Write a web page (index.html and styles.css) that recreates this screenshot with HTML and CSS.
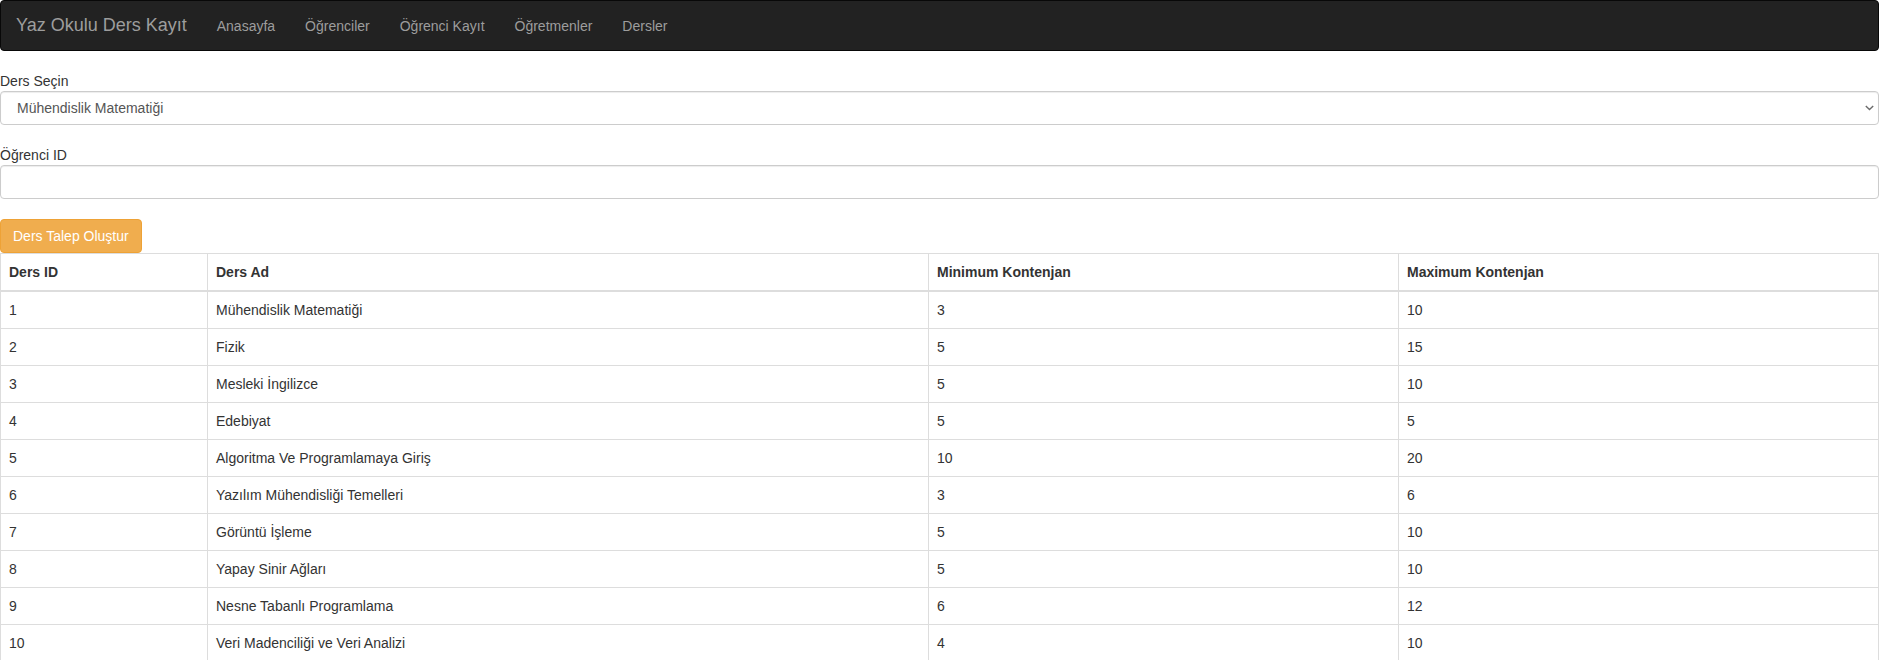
FILE: index.html
```html
<!DOCTYPE html>
<html lang="tr">
<head>
<meta charset="utf-8">
<title>Yaz Okulu Ders Kayıt</title>
<link rel="stylesheet" href="styles.css">
</head>
<body>
<nav class="navbar">
  <a class="brand" href="#">Yaz Okulu Ders Kayıt</a>
  <ul class="nav">
    <li><a href="#">Anasayfa</a></li>
    <li><a href="#">Öğrenciler</a></li>
    <li><a href="#">Öğrenci Kayıt</a></li>
    <li><a href="#">Öğretmenler</a></li>
    <li><a href="#">Dersler</a></li>
  </ul>
</nav>

<div class="form-group">
  <label class="label" for="ders">Ders Seçin</label>
  <div class="select-wrap">
    <select id="ders" class="form-control select">
      <option>Mühendislik Matematiği</option>
      <option>Fizik</option>
    </select>
    <svg class="chevron" width="9" height="6" viewBox="0 0 9 6" aria-hidden="true"><polyline points="0.8,1 4.5,4.6 8.2,1" fill="none" stroke="#6b6b6b" stroke-width="1.4"/></svg>
  </div>
</div>

<div class="form-group">
  <label class="label" for="ogr">Öğrenci ID</label>
  <input id="ogr" class="form-control" type="text">
</div>

<button class="btn-warning" type="button">Ders Talep Oluştur</button>

<table class="table">
  <thead>
    <tr>
      <th class="c1">Ders ID</th>
      <th class="c2">Ders Ad</th>
      <th class="c3">Minimum Kontenjan</th>
      <th class="c4">Maximum Kontenjan</th>
    </tr>
  </thead>
  <tbody>
    <tr><td>1</td><td>Mühendislik Matematiği</td><td>3</td><td>10</td></tr>
    <tr><td>2</td><td>Fizik</td><td>5</td><td>15</td></tr>
    <tr><td>3</td><td>Mesleki İngilizce</td><td>5</td><td>10</td></tr>
    <tr><td>4</td><td>Edebiyat</td><td>5</td><td>5</td></tr>
    <tr><td>5</td><td>Algoritma Ve Programlamaya Giriş</td><td>10</td><td>20</td></tr>
    <tr><td>6</td><td>Yazılım Mühendisliği Temelleri</td><td>3</td><td>6</td></tr>
    <tr><td>7</td><td>Görüntü İşleme</td><td>5</td><td>10</td></tr>
    <tr><td>8</td><td>Yapay Sinir Ağları</td><td>5</td><td>10</td></tr>
    <tr><td>9</td><td>Nesne Tabanlı Programlama</td><td>6</td><td>12</td></tr>
    <tr><td>10</td><td>Veri Madenciliği ve Veri Analizi</td><td>4</td><td>10</td></tr>
  </tbody>
</table>
</body>
</html>
```

FILE: styles.css
```css
* { box-sizing: border-box; }
html, body { margin: 0; padding: 0; }
body {
  font-family: "Liberation Sans", Arial, Helvetica, sans-serif;
  font-size: 14px;
  line-height: 20px;
  color: #333;
  background: #fff;
}
.navbar {
  display: flex;
  align-items: center;
  height: 51px;
  background: #222;
  border: 1px solid #080808;
  border-radius: 4px;
  margin-bottom: 20px;
}
.brand {
  font-size: 18px;
  line-height: 20px;
  padding: 14px 15px 15px;
  color: #9d9d9d;
  text-decoration: none;
}
.nav {
  display: flex;
  list-style: none;
  margin: 0;
  padding: 0;
}
.nav a {
  display: block;
  padding: 15px;
  color: #9d9d9d;
  text-decoration: none;
  line-height: 20px;
}
.form-group { margin-bottom: 20px; }
.label {
  display: block;
  font-weight: normal;
  margin: 0;
}
.form-control {
  display: block;
  width: 100%;
  height: 34px;
  padding: 6px 12px;
  font-family: inherit;
  font-size: 14px;
  line-height: 20px;
  color: #555;
  background: #fff;
  border: 1px solid #ccc;
  border-radius: 4px;
  box-shadow: inset 0 1px 1px rgba(0,0,0,.075);
  margin: 0;
}
.select-wrap { position: relative; }
.select {
  -webkit-appearance: none;
  appearance: none;
  padding-left: 16px;
}
.chevron {
  position: absolute;
  right: 5px;
  top: 14px;
  pointer-events: none;
}
.btn-warning {
  display: block;
  height: 34px;
  padding: 6px 12px;
  font-family: inherit;
  font-size: 14px;
  line-height: 20px;
  color: #fff;
  background: #f0ad4e;
  border: 1px solid #eea236;
  border-radius: 4px;
  margin: 0;
}
.table {
  width: 100%;
  border-collapse: collapse;
  table-layout: fixed;
  border: 1px solid #ddd;
}
.table th, .table td {
  padding: 8px;
  line-height: 20px;
  text-align: left;
  border: 1px solid #ddd;
  vertical-align: top;
}
.table thead th {
  font-weight: bold;
  border-bottom-width: 2px;
  vertical-align: bottom;
}
.c1 { width: 207px; }
.c2 { width: 721px; }
.c3 { width: 470px; }
```
